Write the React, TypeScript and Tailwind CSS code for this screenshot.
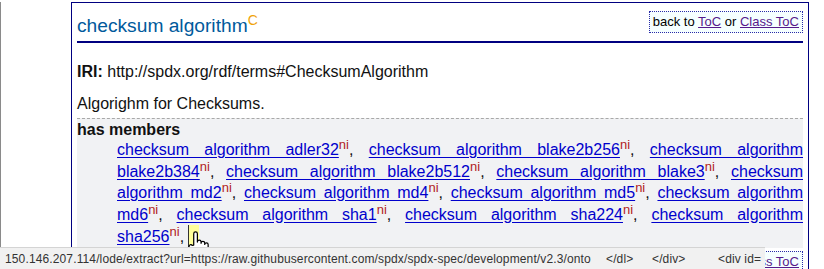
import React from "react";

const linkCls = "text-[#0000cc] underline decoration-[#0000cc] underline-offset-[2px]";

function Ni() {
  return <sup className="text-[13px] text-[#b22222] relative top-[-6px]">ni</sup>;
}

function L({ children }: { children: React.ReactNode }) {
  return <a href="#" className={linkCls}>{children}</a>;
}

function Line({ children }: { children: React.ReactNode }) {
  return <div className="text-justify [text-align-last:justify] whitespace-nowrap">{children}</div>;
}

function TocBox() {
  return (
    <div className="border border-dotted border-[#2a2aa8] bg-[#f5ffff] px-[3px] h-[22px] leading-[20px] text-[13px] text-black">
      back to <a href="#" className="text-[#551a8b] underline">ToC</a> or{" "}
      <a href="#" className="text-[#551a8b] underline">Class ToC</a>
    </div>
  );
}

export default function App() {
  return (
    <div className="relative h-[269px] w-[824px] overflow-hidden bg-white font-['Liberation_Sans',Arial,sans-serif] text-[#111]">
      <div className="h-full border-l border-[#8a8a8a]">
        <div className="ml-[70px] mt-[2px] w-[738px] border border-b-0 border-[#000080] px-[5px]">
          {/* header */}
          <div className="flex h-[40px] items-start justify-between border-b-2 border-[#000080]">
            <h2 className="mt-[12px] text-[19.2px] leading-[22px] text-[#005a9c]">
              checksum algorithm
              <sup className="text-[14px] text-[#f0a30a] relative top-[-7px]">C</sup>
            </h2>
            <div className="mt-[8px]">
              <TocBox />
            </div>
          </div>

          <div className="mt-[20px] text-[16px] leading-[18px]">
            <b>IRI:</b> http://spdx.org/rdf/terms#ChecksumAlgorithm
          </div>
          <div className="mt-[14px] text-[16px] leading-[18px]">Algorighm for Checksums.</div>

          <div className="mt-[5px] border-t border-dashed border-[#a8a8a8] bg-[#f1f2f4] pt-[2px] text-[16px]">
            <div className="font-bold leading-[18px]">has members</div>
            <div className="ml-[40px] leading-[21.5px]">
              <Line>
                <L>checksum algorithm adler32</L><Ni />, <L>checksum algorithm blake2b256</L><Ni />,{" "}
                <L>checksum algorithm</L>
              </Line>
              <Line>
                <L>blake2b384</L><Ni />, <L>checksum algorithm blake2b512</L><Ni />,{" "}
                <L>checksum algorithm blake3</L><Ni />, <L>checksum</L>
              </Line>
              <Line>
                <L>algorithm md2</L><Ni />, <L>checksum algorithm md4</L><Ni />,{" "}
                <L>checksum algorithm md5</L><Ni />, <L>checksum algorithm</L>
              </Line>
              <Line>
                <L>md6</L><Ni />, <L>checksum algorithm sha1</L><Ni />, <L>checksum algorithm sha224</L>
                <Ni />, <L>checksum algorithm</L>
              </Line>
              <div className="flex items-center">
                <span>
                  <L>sha256</L>
                  <Ni />,
                </span>
                <span className="ml-[4px] inline-block h-[23px] w-[11px] border-l border-[#333] bg-[#ffff99]" />
              </div>
            </div>
          </div>

          <div className="mt-[3px] flex justify-end">
            <TocBox />
          </div>
        </div>
      </div>

      {/* hand cursor */}
      <svg
        className="absolute left-[187px] top-[231px]"
        width="22"
        height="27"
        viewBox="0 0 18 22"
      >
        <path
          d="M5.5 11.5 V2.2 a1.5 1.5 0 0 1 3 0 V9 a1.5 1.5 0 0 1 3 0 V10 a1.5 1.5 0 0 1 3 0 V11 a1.4 1.4 0 0 1 2.8 0 V15.5 c0 3.2 -2 5.5 -5 5.5 H9.5 c-2 0 -3.2 -1 -4.2 -2.6 L2 13.5 a1.4 1.4 0 0 1 2.2 -1.8 Z"
          fill="white"
          stroke="black"
          strokeWidth="1"
          strokeLinejoin="round"
        />
        <path d="M8.5 15 V18 M11.5 15 V18 M14.3 15 V18" stroke="black" strokeWidth="0.8" />
      </svg>

      {/* status bar */}
      <div className="absolute bottom-0 left-0 flex h-[22px] w-[765px] items-center overflow-hidden border-t border-[#d4d4d4] bg-[#f1f1f1] pl-[5px] text-[12px] tracking-[0.13px] text-[#333]">
        <span className="w-[601px] shrink-0">
          150.146.207.114/lode/extract?url=https://raw.githubusercontent.com/spdx/spdx-spec/development/v2.3/onto
        </span>
        <span className="w-[46px] shrink-0">&lt;/dl&gt;</span>
        <span className="w-[66px] shrink-0">&lt;/div&gt;</span>
        <span className="shrink-0">&lt;div id=</span>
      </div>
    </div>
  );
}
